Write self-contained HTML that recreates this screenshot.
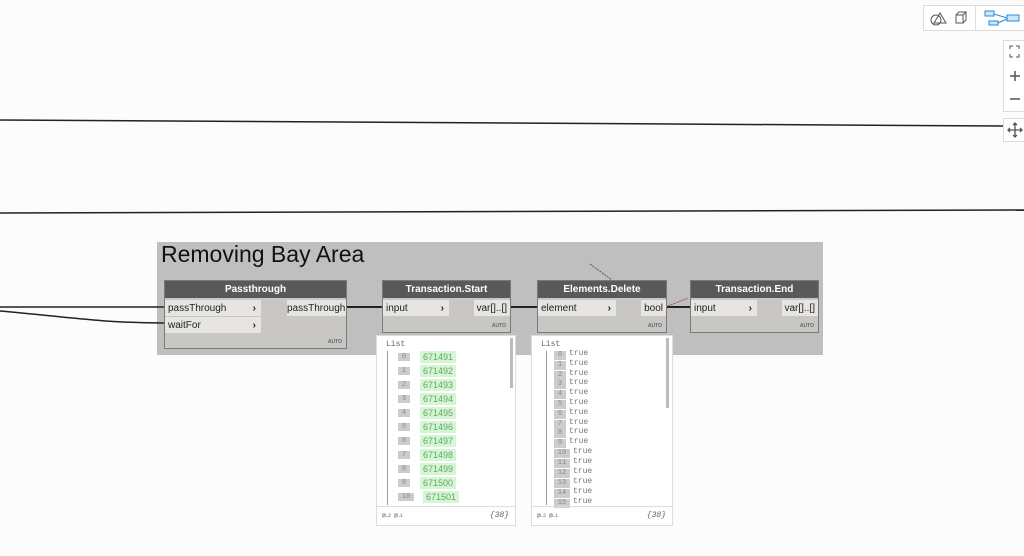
<!DOCTYPE html>
<html><head><meta charset="utf-8"><style>
body{margin:0;width:1024px;height:556px;background:#fcfcfc;position:relative;overflow:hidden;font-family:"Liberation Sans",sans-serif}
.a{position:absolute}
.grp{left:157px;top:242px;width:666px;height:113px;background:#bfbfbf}
.ttl{left:161px;top:241px;font-size:23px;color:#111}
.node{background:#c9c7c3;border:1px solid #7a7a7a;box-sizing:border-box}
.hd{position:absolute;left:0;right:0;top:0;height:17px;background:#595959;color:#fff;font-size:10px;font-weight:bold;text-align:center;line-height:18px}
.pi{position:absolute;background:#e7e5e1;font-size:10px;color:#222;line-height:17px;padding-left:3px;box-sizing:border-box;height:16px}
.pi b{position:absolute;right:5px;top:0;font-weight:bold;font-size:10px}
.po{position:absolute;background:#e7e5e1;font-size:10px;color:#222;line-height:17px;text-align:right;padding-right:3px;box-sizing:border-box;height:16px}
.auto{position:absolute;right:4px;bottom:3px;font-size:5px;color:#666;font-weight:bold}
.pv{background:#fff;border:1px solid #ddd;box-sizing:border-box;font-family:"Liberation Mono",monospace;font-size:8px;color:#666}
.ft{position:absolute;left:0;right:0;bottom:0;height:18px;border-top:1px solid #ddd;font-size:5px;line-height:18px;padding-left:5px}
.ft i{position:absolute;right:6px;font-size:8px}
.ix{position:absolute;background:#ccc;color:#888;font-size:7px;text-align:center;height:8px;line-height:8px}
.gv{position:absolute;background:#d6f5d6;color:#5cab5c;font-size:9px;font-family:"Liberation Sans",sans-serif;padding:0 3px;height:12px;line-height:12px}
.tv{position:absolute;font-size:8px;color:#777}
.box{background:#fff;border:1px solid #ddd;box-sizing:border-box}
</style></head><body>
<svg class="a" style="left:0;top:0" width="1024" height="556">
<path d="M0 120 L1003 126" stroke="#222" stroke-width="1.5" fill="none"/>
<path d="M0 213 L1024 210" stroke="#222" stroke-width="1.5" fill="none"/>
</svg>
<div class="a grp"></div>
<div class="a ttl">Removing Bay Area</div>
<svg class="a" style="left:0;top:0" width="1024" height="556">
<path d="M0 307 L164 307" stroke="#222" stroke-width="1.5" fill="none"/>
<path d="M0 311 C60 316 100 323 164 323" stroke="#222" stroke-width="1.5" fill="none"/>
<path d="M346 307 L382 307 M510 307 L537 307 M666 307 L690 307" stroke="#222" stroke-width="2" fill="none"/>
<path d="M590 264 L612 280" stroke="#555" stroke-width="1" stroke-dasharray="2,1" fill="none"/>
<path d="M668 306 L688 298" stroke="#a44" stroke-width="1" stroke-dasharray="2,1" fill="none"/>
</svg>
<div class="a node" style="left:164px;top:280px;width:183px;height:69px"><div class="hd">Passthrough</div>
<div class="pi" style="left:0;top:19px;width:96px">passThrough<b>›</b></div>
<div class="pi" style="left:0;top:36px;width:96px">waitFor<b>›</b></div>
<div class="po" style="right:0;top:19px;width:59px">passThrough</div><div class="auto">AUTO</div></div>
<div class="a node" style="left:382px;top:280px;width:129px;height:53px"><div class="hd">Transaction.Start</div>
<div class="pi" style="left:0;top:19px;width:66px">input<b>›</b></div>
<div class="po" style="right:0;top:19px;width:36px">var[]..[]</div><div class="auto">AUTO</div></div>
<div class="a node" style="left:537px;top:280px;width:130px;height:53px"><div class="hd">Elements.Delete</div>
<div class="pi" style="left:0;top:19px;width:78px">element<b>›</b></div>
<div class="po" style="right:0;top:19px;width:25px">bool</div><div class="auto">AUTO</div></div>
<div class="a node" style="left:690px;top:280px;width:129px;height:53px"><div class="hd">Transaction.End</div>
<div class="pi" style="left:0;top:19px;width:66px">input<b>›</b></div>
<div class="po" style="right:0;top:19px;width:36px">var[]..[]</div><div class="auto">AUTO</div></div>

<div class="a pv" style="left:376px;top:335px;width:140px;height:191px">
<div class="a" style="left:9px;top:4px">List</div>
<div class="a" style="left:10px;top:15px;width:1px;height:154px;background:#999"></div>
<div class="a" style="left:133px;top:2px;width:3px;height:50px;background:#bbb"></div>
<div class="ix" style="left:21px;top:17px;width:12px">0</div><div class="gv" style="left:43px;top:15px">671491</div>
<div class="ix" style="left:21px;top:31px;width:12px">1</div><div class="gv" style="left:43px;top:29px">671492</div>
<div class="ix" style="left:21px;top:45px;width:12px">2</div><div class="gv" style="left:43px;top:43px">671493</div>
<div class="ix" style="left:21px;top:59px;width:12px">3</div><div class="gv" style="left:43px;top:57px">671494</div>
<div class="ix" style="left:21px;top:73px;width:12px">4</div><div class="gv" style="left:43px;top:71px">671495</div>
<div class="ix" style="left:21px;top:87px;width:12px">5</div><div class="gv" style="left:43px;top:85px">671496</div>
<div class="ix" style="left:21px;top:101px;width:12px">6</div><div class="gv" style="left:43px;top:99px">671497</div>
<div class="ix" style="left:21px;top:115px;width:12px">7</div><div class="gv" style="left:43px;top:113px">671498</div>
<div class="ix" style="left:21px;top:129px;width:12px">8</div><div class="gv" style="left:43px;top:127px">671499</div>
<div class="ix" style="left:21px;top:143px;width:12px">9</div><div class="gv" style="left:43px;top:141px">671500</div>
<div class="ix" style="left:21px;top:157px;width:16px">10</div><div class="gv" style="left:46px;top:155px">671501</div>
<div class="ft">@L2 @L1<i>{38}</i></div></div>

<div class="a pv" style="left:531px;top:335px;width:142px;height:191px">
<div class="a" style="left:9px;top:4px">List</div>
<div class="a" style="left:14px;top:15px;width:1px;height:154px;background:#999"></div>
<div class="a" style="left:134px;top:2px;width:3px;height:70px;background:#bbb"></div>
<div class="ix" style="left:22px;top:15px;width:12px;height:9px">0</div><div class="tv" style="left:37px;top:13px">true</div>
<div class="ix" style="left:22px;top:25px;width:12px;height:9px">1</div><div class="tv" style="left:37px;top:23px">true</div>
<div class="ix" style="left:22px;top:35px;width:12px;height:9px">2</div><div class="tv" style="left:37px;top:33px">true</div>
<div class="ix" style="left:22px;top:44px;width:12px;height:9px">3</div><div class="tv" style="left:37px;top:42px">true</div>
<div class="ix" style="left:22px;top:54px;width:12px;height:9px">4</div><div class="tv" style="left:37px;top:52px">true</div>
<div class="ix" style="left:22px;top:64px;width:12px;height:9px">5</div><div class="tv" style="left:37px;top:62px">true</div>
<div class="ix" style="left:22px;top:74px;width:12px;height:9px">6</div><div class="tv" style="left:37px;top:72px">true</div>
<div class="ix" style="left:22px;top:84px;width:12px;height:9px">7</div><div class="tv" style="left:37px;top:82px">true</div>
<div class="ix" style="left:22px;top:93px;width:12px;height:9px">8</div><div class="tv" style="left:37px;top:91px">true</div>
<div class="ix" style="left:22px;top:103px;width:12px;height:9px">9</div><div class="tv" style="left:37px;top:101px">true</div>
<div class="ix" style="left:22px;top:113px;width:16px;height:9px">10</div><div class="tv" style="left:41px;top:111px">true</div>
<div class="ix" style="left:22px;top:123px;width:16px;height:9px">11</div><div class="tv" style="left:41px;top:121px">true</div>
<div class="ix" style="left:22px;top:133px;width:16px;height:9px">12</div><div class="tv" style="left:41px;top:131px">true</div>
<div class="ix" style="left:22px;top:143px;width:16px;height:9px">13</div><div class="tv" style="left:41px;top:141px">true</div>
<div class="ix" style="left:22px;top:153px;width:16px;height:9px">14</div><div class="tv" style="left:41px;top:151px">true</div>
<div class="ix" style="left:22px;top:163px;width:16px;height:9px">15</div><div class="tv" style="left:41px;top:161px">true</div>
<div class="ft">@L2 @L1<i>{38}</i></div></div>

<div class="a box" style="left:923px;top:5px;width:102px;height:26px"></div>
<div class="a" style="left:975px;top:5px;width:1px;height:26px;background:#ddd"></div>
<svg class="a" style="left:928px;top:8px" width="95" height="20">
<circle cx="8" cy="12" r="5" stroke="#555" fill="none"/><path d="M6 15 L12 5 L18 15 Z" stroke="#555" fill="none"/>
<path d="M28 7 h7 v8 h-7 z M28 7 l3 -3 h7 l-3 3 M35 15 l3 -3 v-8" stroke="#555" fill="none"/>
<rect x="57" y="3" width="9" height="5" stroke="#2a8ad4" fill="#cfe6f8"/><rect x="61" y="13" width="9" height="4" stroke="#2a8ad4" fill="#cfe6f8"/><rect x="79" y="7" width="12" height="6" stroke="#2a8ad4" fill="#cfe6f8"/>
<path d="M66 6 L79 10 M70 15 L79 11" stroke="#2a8ad4" fill="none"/></svg>
<div class="a box" style="left:1003px;top:40px;width:22px;height:72px"></div>
<svg class="a" style="left:1003px;top:40px" width="22" height="72">
<path d="M7 9 v-3 h3 M13 6 h3 v3 M16 14 v3 h-3 M10 17 h-3 v-3" stroke="#555" fill="none"/>
<path d="M7 36 h10 M12 31 v10" stroke="#555" stroke-width="1.5"/>
<path d="M7 59 h10" stroke="#555" stroke-width="1.5"/></svg>
<div class="a box" style="left:1003px;top:118px;width:22px;height:24px"></div>
<svg class="a" style="left:1003px;top:118px" width="22" height="24">
<path d="M12 5 v14 M5 12 h14 M10 7 l2-2 2 2 M10 17 l2 2 2-2 M7 10 l-2 2 2 2 M17 10 l2 2-2 2" stroke="#555" fill="none" stroke-width="1.3"/></svg>
</body></html>
